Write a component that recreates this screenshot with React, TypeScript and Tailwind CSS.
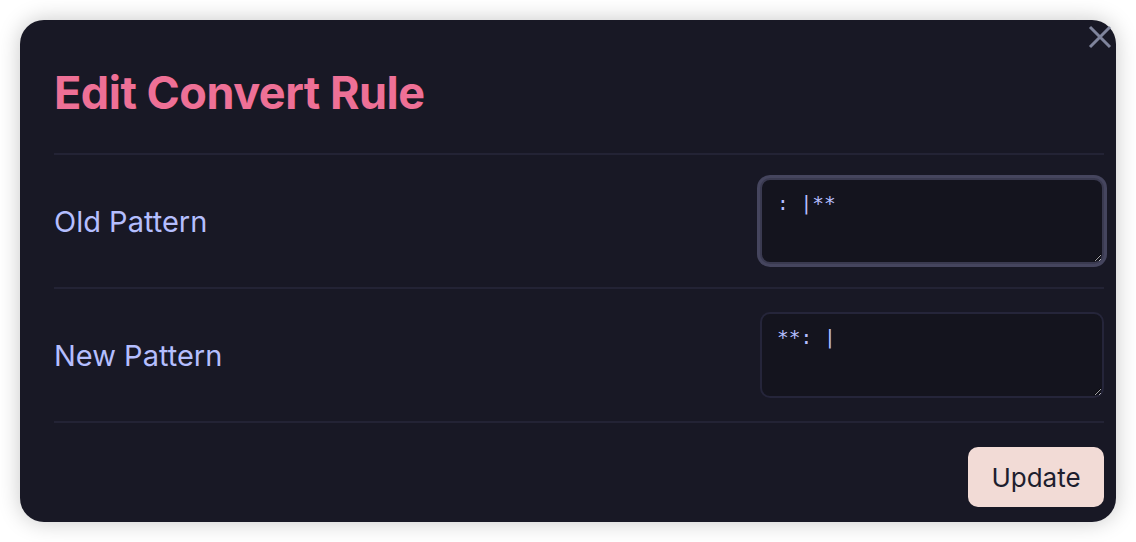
import * as React from 'react';

const Row: React.FC<{ label: string; value: string; focused?: boolean }> = ({ label, value, focused }) => (
  <div className="flex items-center justify-between py-[23px]">
    <span className="text-[29px] leading-none text-[#b4befe]">{label}</span>
    <textarea
      defaultValue={value}
      spellCheck={false}
      className={
        'h-[86px] w-[344px] rounded-[10px] border-2 bg-[#14141e] px-[15px] pt-[10px] text-[19.5px] leading-[28px] text-[#b4befe] outline-none ' +
        (focused ? 'border-[#3a3a50] ring-[3px] ring-[#45455e]' : 'border-[#25253a]')
      }
      style={{ fontFamily: '"DejaVu Sans Mono", monospace' }}
    />
  </div>
);

export default function App() {
  return (
    <div className="min-h-screen bg-white p-[20px]" style={{ fontFamily: 'Inter, "Noto Sans", sans-serif' }}>
      <div className="relative rounded-[24px] bg-[#181825] pl-[34px] pr-[12px] pt-[50px] pb-[15px] shadow-[0_0_22px_rgba(0,0,0,0.22)]">
        <button className="absolute right-[4px] top-[5px] h-[24px] w-[24px] text-[#7f849c]" aria-label="Close">
          <svg viewBox="0 0 24 24" className="h-full w-full" fill="none" stroke="currentColor" strokeWidth={3} strokeLinecap="butt">
            <path d="M2 2L22 22M22 2L2 22" />
          </svg>
        </button>
        <h1 className="mb-[38px] text-[45px] font-bold leading-none tracking-[-0.5px] text-[#ee7096]">Edit Convert Rule</h1>
        <div className="h-[2px] bg-[#232335]" />
        <Row label="Old Pattern" value=": |**" focused />
        <div className="h-[2px] bg-[#232335]" />
        <Row label="New Pattern" value="**: |" />
        <div className="h-[2px] bg-[#232335]" />
        <div className="flex justify-end pt-[24px]">
          <button className="h-[60px] w-[136px] rounded-[10px] bg-[#f2dbd6] text-[26px] text-[#1e1e2e]">Update</button>
        </div>
      </div>
    </div>
  );
}
